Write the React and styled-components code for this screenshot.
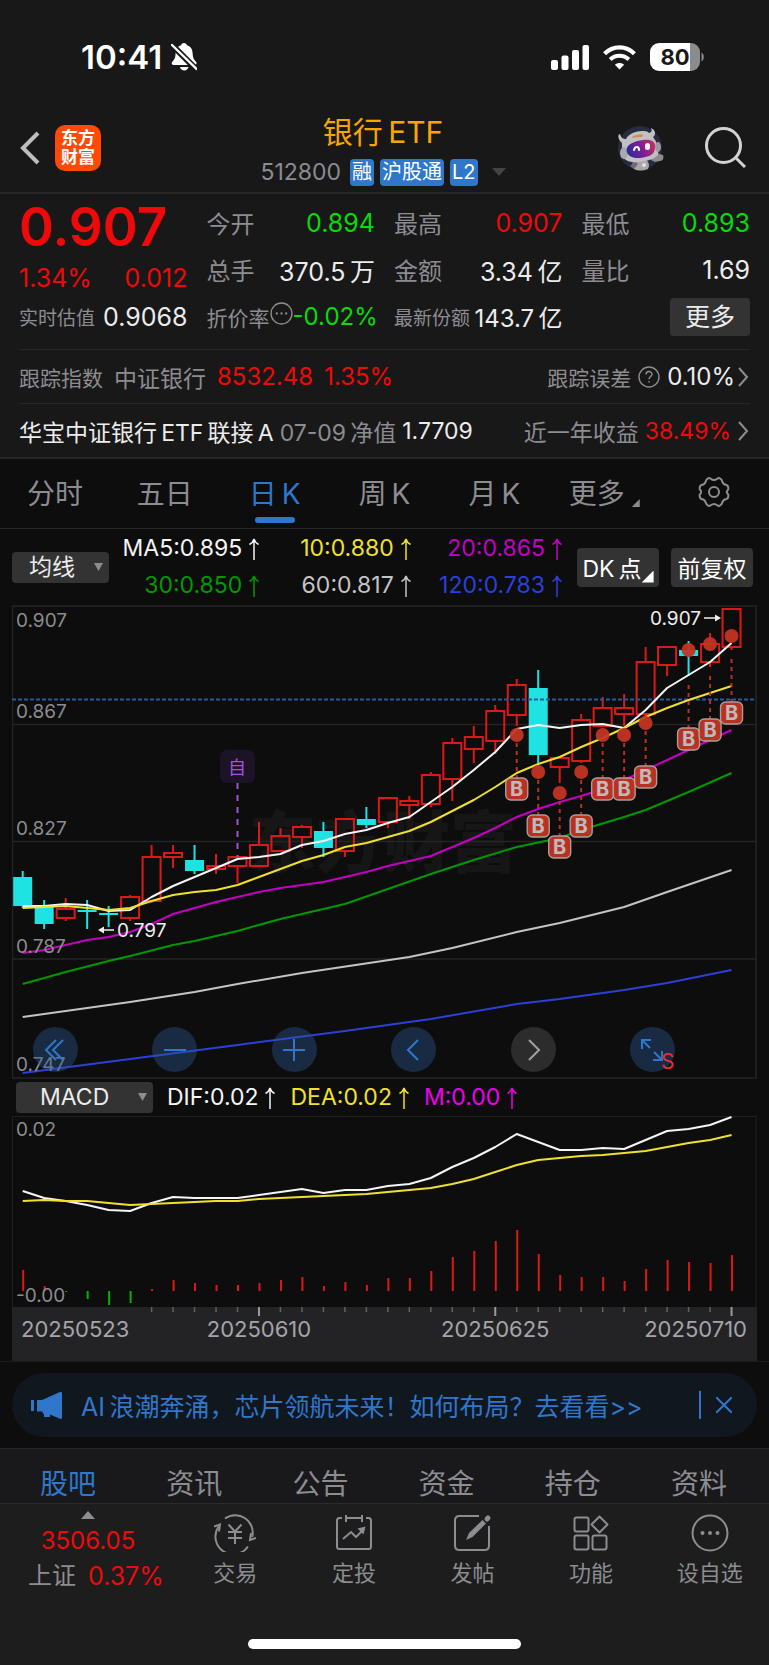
import React from 'react';
import styled, { createGlobalStyle } from 'styled-components';

const colors = {
  page: '#0d0d0d',
  panel: '#181818',
  nav: '#1d1d1d',
  line: '#262626',
  control: '#333333',
  text: '#ececec',
  muted: '#8c8c91',
  blue: '#2f77cb',
  red: '#ee0a0a',
  candle: '#dc1919',
  green: '#06dd06',
  cyan: '#1fe3e3',
  yellow: '#f0e130',
  magenta: '#c400c4',
  signal: '#c43423',
};

const GlobalStyle = createGlobalStyle`
  * { box-sizing: border-box; }
  body {
    margin: 0;
    background: ${colors.page};
    color: ${colors.text};
    font-family: Inter, "Noto Sans CJK SC", sans-serif;
    -webkit-font-smoothing: antialiased;
  }
  button, select {
    margin: 0;
    padding: 0;
    border: 0;
    background: none;
    color: inherit;
    font: inherit;
    cursor: pointer;
  }
  a { color: inherit; text-decoration: none; }
  p, h1 { margin: 0; }
  svg { display: block; flex: none; }
`;

const tones = {
  up: colors.red,
  down: colors.green,
  muted: colors.muted,
  plain: colors.text,
};

/* ---------- top of the screen ---------- */

const StatusBar = styled.div`
  display: flex;
  align-items: center;
  justify-content: space-between;
  height: 102px;
  padding: 12px 64px 0 81px;
  background: ${colors.panel};
  color: #fff;
`;

const StatusGroup = styled.div`
  display: flex;
  align-items: center;
  gap: ${(p) => p.$gap}px;
`;

const Clock = styled.span`
  font-size: 33px;
  font-weight: 600;
  line-height: 40px;
`;

const Header = styled.header`
  display: grid;
  grid-template-columns: 1fr auto 1fr;
  align-items: center;
  padding: 10px 23px 0 20px;
  border-bottom: 2px solid ${colors.line};
  background: ${colors.panel};
`;

const HeaderSide = styled.div`
  display: flex;
  align-items: center;
  justify-content: ${(p) => (p.$end ? 'flex-end' : 'flex-start')};
  gap: ${(p) => (p.$end ? 41 : 15)}px;
  padding-bottom: 9px;
`;

const Logo = styled.span`
  display: grid;
  place-content: center;
  width: 46px;
  height: 46px;
  border-radius: 10px;
  background: #ff4a05;
  color: #fff;
  font-size: 17px;
  font-weight: 700;
  line-height: 19px;
  text-align: center;
`;

const HeaderTitle = styled.div`
  display: flex;
  flex-direction: column;
  align-items: center;
`;

const Name = styled.h1`
  color: #f7a500;
  font-size: 30px;
  font-weight: 400;
  line-height: 40px;
`;

const CodeLine = styled.div`
  display: flex;
  align-items: center;
  gap: 6px;
  height: 40px;
  color: ${colors.muted};
  font-size: 23px;
`;

const Code = styled.span`
  margin-right: 3px;
`;

const Tag = styled.span`
  padding: 0 2px;
  border-radius: 4px;
  background: ${colors.blue};
  color: #fff;
  font-size: 20px;
  line-height: 27px;
`;

const CodeArrow = styled.span`
  margin-left: 8px;
`;

/* ---------- quote ---------- */

const Quote = styled.section`
  padding: 0 19px;
  border-bottom: 2px solid ${colors.line};
  background: ${colors.panel};
`;

const QuoteGrid = styled.div`
  display: grid;
  grid-template-columns: repeat(4, minmax(0, 1fr));
  grid-auto-rows: 47px;
  column-gap: 19px;
  align-items: center;
  padding: 5px 0 9px;
`;

const PriceBlock = styled.div`
  grid-row: span 2;
  align-self: start;
  color: ${colors.red};
`;

const Price = styled.p`
  font-size: 53px;
  font-weight: 600;
  line-height: 56px;
`;

const Change = styled.p`
  display: flex;
  justify-content: space-between;
  font-size: 25px;
  line-height: 46px;
`;

const Cell = styled.div`
  display: flex;
  align-items: center;
  justify-content: space-between;
  white-space: nowrap;
`;

const Label = styled.span`
  display: flex;
  color: ${colors.muted};
  font-size: ${(p) => p.$size || 24}px;
`;

const Value = styled.span`
  color: ${(p) => tones[p.$tone || 'plain']};
  font-size: ${(p) => p.$size || 25}px;
`;

const MoreButton = styled.button`
  justify-self: end;
  width: 80px;
  height: 38px;
  border-radius: 4px;
  background: ${colors.control};
  font-size: 25px;
  line-height: 38px;
`;

const InfoRow = styled.a`
  display: flex;
  align-items: center;
  justify-content: space-between;
  height: 54px;
  border-top: 1px solid ${colors.line};
  font-size: 23px;
  white-space: nowrap;
`;

const InfoGroup = styled.span`
  display: flex;
  align-items: center;
  gap: ${(p) => p.$gap || 6}px;
`;

const Tone = styled.span`
  color: ${(p) => tones[p.$tone]};
  font-size: ${(p) => p.$size || 23}px;
`;

/* ---------- period tabs and averages ---------- */

const Periods = styled.div`
  display: grid;
  grid-template-columns: repeat(7, 1fr);
  height: 70px;
  border-bottom: 1px solid ${colors.line};
`;

const Period = styled.button`
  display: flex;
  position: relative;
  align-items: center;
  justify-content: center;
  gap: 7px;
  padding-bottom: 3px;
  color: ${(p) => (p.$active ? colors.blue : colors.muted)};
  font-size: 28px;

  &::after {
    content: '';
    display: ${(p) => (p.$active ? 'block' : 'none')};
    position: absolute;
    bottom: 5px;
    left: 50%;
    width: 40px;
    height: 6px;
    margin-left: -20px;
    border-radius: 3px;
    background: ${colors.blue};
  }
`;

const CornerMark = styled.span`
  align-self: flex-end;
  width: ${(p) => p.$size}px;
  height: ${(p) => p.$size}px;
  margin-bottom: ${(p) => p.$lift}px;
  background: currentColor;
  clip-path: polygon(100% 0, 100% 100%, 0 100%);
`;

const AverageBar = styled.div`
  display: flex;
  align-items: center;
  height: 76px;
  padding: 0 16px 0 12px;
`;

const Picker = styled.label`
  display: block;
  position: relative;
  width: ${(p) => p.$width}px;
  height: 31px;
  border-radius: 4px;
  background: ${colors.control};
  font-size: 23px;

  svg {
    position: absolute;
    top: 11px;
    right: 6px;
    pointer-events: none;
  }
`;

const PickerSelect = styled.select`
  display: block;
  width: 100%;
  height: 31px;
  padding-left: ${(p) => p.$indent}px;
  appearance: none;
  line-height: 31px;
`;

const Averages = styled.div`
  display: grid;
  flex: 1;
  grid-template-columns: repeat(3, 1fr);
  margin-right: 14px;
`;

const Reading = styled.span`
  display: flex;
  align-items: center;
  justify-content: flex-end;
  gap: 6px;
  color: ${(p) => p.$color};
  font-size: 23px;
  line-height: 37px;
  white-space: nowrap;
`;

const ToolButton = styled.button`
  display: flex;
  align-items: center;
  justify-content: center;
  width: 82px;
  height: 39px;
  border-radius: 4px;
  background: ${colors.control};
  color: #fff;
  font-size: 23px;
  white-space: nowrap;

  & + & {
    margin-left: 12px;
  }
`;

/* ---------- charts ---------- */

const ChartBox = styled.div`
  position: relative;
  margin: 0 12px;
`;

const ChartSvg = styled.svg`
  width: 100%;
  height: auto;
  font-family: Inter, "Noto Sans CJK SC", sans-serif;
`;

const ChartControls = styled.div`
  display: flex;
  position: absolute;
  right: 82px;
  bottom: 7px;
  left: 21px;
  justify-content: space-between;
`;

const RoundButton = styled.button`
  display: grid;
  place-items: center;
  width: 45px;
  height: 45px;
  border-radius: 50%;
  background: ${(p) => (p.$idle ? 'rgba(92, 92, 96, 0.4)' : 'rgba(42, 90, 148, 0.4)')};
  color: ${(p) => (p.$idle ? '#a0a0a0' : colors.blue)};

  svg {
    overflow: visible;
  }
`;

const MacdBar = styled.div`
  display: flex;
  align-items: center;
  gap: 14px;
  height: 37px;
  padding: 0 16px;
`;

/* ---------- banner and bottom bars ---------- */

const BannerWrap = styled.div`
  padding: 11px 12px;
  border-top: 1px solid #1a1a1a;
`;

const Banner = styled.div`
  display: flex;
  align-items: center;
  height: 64px;
  padding: 0 25px 0 19px;
  border-radius: 32px;
  background: #10171f;
  color: ${colors.blue};
  font-size: 25px;
`;

const BannerLink = styled.a`
  flex: 1;
  margin-left: 19px;
  white-space: nowrap;
`;

const BannerClose = styled.button`
  display: flex;
  align-items: center;
  height: 28px;
  padding-left: 15px;
  border-left: 2px solid ${colors.blue};
`;

const Sections = styled.nav`
  display: grid;
  grid-template-columns: repeat(6, 1fr);
  padding: 17px 7px 0 5px;
  border-top: 1px solid ${colors.line};
  border-bottom: 1px solid #2c2c2c;
  background: #19191b;
`;

const SectionLink = styled.a`
  color: ${(p) => (p.$active ? colors.blue : colors.muted)};
  font-size: 28px;
  line-height: 37px;
  text-align: center;
`;

const ActionBar = styled.nav`
  display: grid;
  grid-template-columns: 176px repeat(5, 1fr);
  height: 92px;
  background: ${colors.nav};
  color: ${colors.muted};
`;

const IndexLink = styled.a`
  display: flex;
  flex-direction: column;
  padding: 7px 0 0 28px;
  white-space: nowrap;
`;

const IndexTop = styled.span`
  display: flex;
  flex-direction: column;
  align-items: center;
  width: 120px;
  color: ${colors.red};
  font-size: 24px;
  line-height: 44px;
`;

const IndexLine = styled.span`
  display: flex;
  gap: 12px;
  font-size: 24px;
  line-height: 26px;
`;

const Action = styled.a`
  display: flex;
  flex-direction: column;
  align-items: center;
  padding-top: 10px;
  font-size: 22px;
  line-height: 43px;
`;

const HomeArea = styled.div`
  display: flex;
  justify-content: center;
  padding: 43px 0 16px;
  background: ${colors.nav};
`;

const HomeBar = styled.span`
  width: 273px;
  height: 10px;
  border-radius: 5px;
  background: #fff;
`;

/* ---------- icons ---------- */

const MutedBell = () => (
  <svg width="26" height="28" viewBox="0 0 26 28" fill="#fff" aria-label="静音">
    <path d="M13 0c1.7 0 2.6 1 2.9 2.2 3.7 1 5.6 4 5.7 7.8.2 4.6 1.2 6.4 3.4 8.800.9 1 .8 3.200-1 3.200H2.300c-1.800 0-2-2-1-3.200 2.200-2.400 3.200-4.200 3.300-8.800.1-3.800 2-6.800 5.500-7.800C10.400 1 11.300 0 13 0z" />
    <path d="M9 24h8.500c-.6 2-2 3.500-4.200 3.500S9.500 26 9 24z" />
    <path d="M0 1 26 27" stroke={colors.panel} strokeWidth="6" />
    <path d="M1 2l24.500 24" stroke="#fff" strokeWidth="2.4" strokeLinecap="round" />
  </svg>
);

const Signal = () => (
  <svg width="38" height="25" viewBox="0 0 38 25" fill="#fff" aria-label="信号">
    <rect y="15" width="7" height="10" rx="2" />
    <rect x="10.5" y="10.5" width="7" height="14.5" rx="2" />
    <rect x="21" y="5" width="7" height="20" rx="2" />
    <rect x="31.5" width="6.5" height="25" rx="2" />
  </svg>
);

const Wifi = () => (
  <svg width="33" height="25" viewBox="0 0 33 25" fill="none" stroke="#fff" strokeWidth="4.2" aria-label="无线网络">
    <path d="M1.6 8.7C9.8.2 23.2.2 31.4 8.7" />
    <path d="M7.2 14.5c5.2-5 13.4-5 18.6 0" />
    <path d="M16.5 24.5l-4.6-4.8c2.6-2.4 6.600-2.400 9.200 0z" fill="#fff" stroke="none" />
  </svg>
);

const Battery = () => (
  <svg width="55" height="28" viewBox="0 0 55 28" aria-label="电量">
    <path d="M9 0h31v28H9a9 9 0 0 1-9-9V9a9 9 0 0 1 9-9z" fill="#fff" />
    <path d="M40 0h1a9 9 0 0 1 9 9v10a9 9 0 0 1-9 9h-1z" fill="#8b8b8b" />
    <path d="M51.5 9.5c3 1.2 3 7.8 0 9z" fill="#8b8b8b" />
    <text x="25" y="22" textAnchor="middle" fill={colors.panel} fontSize="22" fontWeight="700">80</text>
  </svg>
);

const Chevron = ({ width, height, stroke = 2, flip, color = 'currentColor' }) => (
  <svg width={width} height={height} viewBox={`0 0 ${width} ${height}`} fill="none" stroke={color} strokeWidth={stroke}>
    <path
      d={
        flip
          ? `M${width - 2} 2 3 ${height / 2} ${width - 2} ${height - 2}`
          : `M2 2 ${width - 3} ${height / 2} 2 ${height - 2}`
      }
    />
  </svg>
);

const Robot = () => (
  <svg width="46" height="46" viewBox="0 0 46 46" aria-hidden="true">
    <defs>
      <linearGradient id="visor" x1="0" y1="0.6" x2="1" y2="0.3">
        <stop offset="0" stopColor="#2b2a98" />
        <stop offset="0.5" stopColor="#7a1f98" />
        <stop offset="1" stopColor="#c22f5c" />
      </linearGradient>
    </defs>
    <circle cx="22" cy="23" r="22" fill="#262c40" />
    <path d="M14 41c0-5 4-7 9-7s8 2 8 7l-1 3c-5 2-10 2-14 0z" fill="#aaa6ab" />
    <path d="M12 41l5-5 3 3-4 5z" fill="#6f6b78" />
    <path d="M33 35l4-6c1-2 3-2 4 0l4 1c1 3 0 6-3 6l-5 1z" fill="#8d8a92" />
    <path d="M4 18C-1 14 0 9 2 9c1 4 3 5 6 5 2-4 8-8 16-8 3 0 5 0 7 2 3-1 3-3 2-5 5 2 5 7 2 9 4 5 6 11 5 17-1 4-9 7-19 8C11 38 5 35 4 29z" fill="#c3c0c3" />
    <ellipse cx="6" cy="28" rx="4" ry="6" fill="#aaa7ae" />
    <ellipse cx="40" cy="22" rx="3" ry="5" fill="#9d99a4" />
    <path d="M9 23c1-4 8-7 16-8s12 1 12 6-1 8-6 10c-6 2-13 3-17 1-5-2-6-6-5-9z" fill="url(#visor)" />
    <path d="M16 25c1-4 5-4 5 0" stroke="#fff" strokeWidth="2" fill="none" strokeLinecap="round" />
    <rect x="27" y="18" width="5" height="7" rx="2.5" fill="#f5eef8" />
    <path d="M14 12c3-2 8-3 11-2l-1 2c-4 0-7 0-9 1z" fill="#d08a45" />
    <circle cx="26" cy="40" r="2" fill="#e3dfe2" />
  </svg>
);

const SearchIcon = () => (
  <svg width="41" height="41" viewBox="0 0 41 41" fill="none" stroke="#d2d2d2" strokeWidth="3">
    <circle cx="18.5" cy="18.5" r="17" />
    <path d="M31 31l9 9" />
  </svg>
);

const Triangle = ({ width, height, color = colors.muted, up }) => (
  <svg width={width} height={height} viewBox="0 0 10 10" preserveAspectRatio="none" fill={color}>
    <path d={up ? 'M5 0l5 10H0z' : 'M0 0h10L5 10z'} />
  </svg>
);

const UpArrow = () => (
  <svg width="12" height="22" viewBox="0 0 12 22" fill="none" stroke="currentColor" strokeWidth="1.5" aria-label="上升">
    <path d="M6 22V1M1.5 6.5C4 5 5.5 3 6 1c.5 2 2 4 4.5 5.5" />
  </svg>
);

const DotsCircle = ({ size }) => (
  <svg width={size} height={size} viewBox="0 0 22 22" fill="none" stroke="currentColor" strokeWidth="1.3">
    <circle cx="11" cy="11" r="10" />
    <g fill="currentColor" stroke="none">
      <circle cx="6.5" cy="11" r="1.1" />
      <circle cx="11" cy="11" r="1.1" />
      <circle cx="15.5" cy="11" r="1.1" />
    </g>
  </svg>
);

const HelpCircle = () => (
  <svg width="22" height="22" viewBox="0 0 22 22" fill="none" stroke={colors.muted} strokeWidth="1.4">
    <circle cx="11" cy="11" r="10" />
    <path d="M8 8.6c0-4 6-4 6-.4 0 2.3-3 2.5-3 5M11 15v1.6" />
  </svg>
);

const Gear = () => (
  <svg width="32" height="32" viewBox="0 0 32 32" fill="none" stroke={colors.muted} strokeWidth="2" strokeLinejoin="round">
    <path d="M10.5 2.2c1-.4 1.600 0 2.200.5 2 1.600 4.600 1.600 6.600 0 .6-.5 1.200-.9 2.200-.5 1.600.7 2.400 1.600 2.700 3 .5 2.200 2 3.400 4.200 3.800 1.300.3 1.900 2.200 2 3.400.1.900-.3 1.400-.8 1.900-1 1-1 2.400 0 3.400.5.500.9 1 .8 1.900-.1 1.200-.7 3.100-2 3.400-2.200.4-3.700 1.600-4.200 3.800-.3 1.400-1.100 2.300-2.700 3-1 .4-1.600 0-2.200-.5-2-1.600-4.600-1.600-6.600 0-.6.5-1.200.9-2.200.5-1.600-.7-2.400-1.600-2.700-3-.5-2.200-2-3.400-4.200-3.800-1.300-.3-1.900-2.200-2-3.400-.1-.9.3-1.400.8-1.900 1-1 1-2.400 0-3.400-.5-.5-.9-1-.8-1.900.1-1.200.7-3.100 2-3.400 2.200-.4 3.700-1.600 4.200-3.800.3-1.400 1.100-2.300 2.700-3z" />
    <circle cx="16" cy="16" r="5" />
  </svg>
);

const Horn = () => (
  <svg width="31" height="27" viewBox="0 0 31 27" fill="currentColor">
    <rect y="8" width="3" height="11" />
    <path d="M6 8h5L29 0q2-.5 2 1.500v24q0 2-2 1.200L19 22.500v2.500h-6v-2.500l-2-3H6z" />
  </svg>
);

const Cross = () => (
  <svg width="16" height="16" viewBox="0 0 16 16" stroke="currentColor" strokeWidth="2">
    <path d="M0 0l16 16M16 0L0 16" />
  </svg>
);

const ActionIcon = ({ children }) => (
  <svg width="42" height="38" viewBox="0 0 42 38" fill="none" stroke="currentColor" strokeWidth="2">
    {children}
  </svg>
);

const actions = [
  {
    label: '交易',
    icon: (
      <ActionIcon>
        <path d="M11 4.500A17.500 17.500 0 0 1 38.200 23M34 32.500A17.500 17.500 0 0 1 4.500 12.500" />
        <path d="M0 12.500l6-2-1 7M42 24l-6 2 1-7" />
        <path d="M14.500 10.500l6.500 7 6.500-7M14 18h14M14 24h14M21 18v12" />
      </ActionIcon>
    ),
  },
  {
    label: '定投',
    icon: (
      <ActionIcon>
        <path d="M9 4H6.500Q4 4 4 6.500v26Q4 35 6.500 35h29q2.500 0 2.500-2.500v-26Q38 4 35.500 4H33" />
        <path d="M13 1v7M29 1v7M13 4h16M10 25l8-7 5 5 8-8" />
        <path d="M24.500 14.500l8-2-2 8z" fill="currentColor" stroke="none" />
      </ActionIcon>
    ),
  },
  {
    label: '发帖',
    icon: (
      <ActionIcon>
        <path d="M28 2H8.500Q4 2 4 6.500v25Q4 36 8.500 36h25q4.500 0 4.500-4.500V12" />
        <path d="M15 26l3-7L31.500 6l3.500 3.500L21.500 23z" fill="currentColor" stroke="none" />
        <path d="M36 5l1-1" strokeWidth="5" strokeLinecap="round" />
      </ActionIcon>
    ),
  },
  {
    label: '功能',
    icon: (
      <ActionIcon>
        <rect x="4.500" y="3.500" width="14" height="14" rx="2" />
        <path d="M29.500 2.500l8 8-8 8-8-8z" strokeLinejoin="round" />
        <rect x="4.500" y="21.500" width="14" height="14" rx="2" />
        <rect x="22.500" y="21.500" width="14" height="14" rx="2" />
      </ActionIcon>
    ),
  },
  {
    label: '设自选',
    icon: (
      <ActionIcon>
        <circle cx="21" cy="19" r="17.5" />
        <g fill="currentColor" stroke="none">
          <circle cx="13.5" cy="19" r="2" />
          <circle cx="21" cy="19" r="2" />
          <circle cx="28.5" cy="19" r="2" />
        </g>
      </ActionIcon>
    ),
  },
];

/* ---------- chart data, in chart units ---------- */

const xAt = (i) => 10.7 + i * 21.48;

// rising, high, body top, body bottom, low
const candles = [
  [0, 266, 272, 301, 303], [0, 295, 302, 319, 324], [1, 293, 304, 313, 316], [0, 295, 305, 307, 324],
  [0, 301, 308, 310, 322], [1, 290, 292, 313, 316], [1, 240, 252, 296, 298], [1, 240, 248, 252, 263],
  [0, 240, 255, 266, 269], [1, 249, 261, 264, 269], [1, 252, 252, 261, 278], [1, 217, 240, 261, 261],
  [1, 223, 231, 246, 246], [1, 220, 222, 232, 243], [0, 217, 226, 243, 252], [1, 214, 214, 246, 252],
  [0, 202, 214, 220, 223], [1, 193, 193, 217, 223], [1, 191, 196, 200, 214], [1, 167, 170, 199, 202],
  [1, 133, 138, 174, 196], [1, 121, 132, 144, 158], [1, 100, 106, 136, 149], [1, 74, 80, 110, 121],
  [0, 65, 83, 150, 158], [1, 153, 153, 162, 178], [1, 109, 115, 156, 158], [1, 92, 103, 121, 122],
  [1, 89, 103, 109, 121], [1, 42, 57, 109, 112], [1, 42, 42, 60, 71], [0, 36, 45, 51, 71],
  [1, 28, 39, 57, 62], [1, 4, 4, 42, 45],
];

// candle index, dot, start of the dashes, badge
const signals = [
  [23, 130, 130, 184], [24, 167, 167, 221], [25, 188, 188, 242], [26, 167, 167, 221], [27, 130, 130, 184],
  [28, 130, 130, 184], [29, 118, 118, 172], [31, 45, 80, 134], [32, 39, 71, 125], [33, 31, 54, 108],
];

const dense = (ys) => ys.map((y, i) => [i, y]);

const averages = [
  {
    color: '#f5f5f5',
    points: dense([301, 301, 299, 300, 306, 305, 292, 281, 272, 263, 254, 252, 249, 240, 236, 229, 225, 218, 212, 197, 182, 165, 147, 124, 120, 123, 120, 119, 123, 105, 83, 70, 57, 38]),
  },
  {
    color: colors.yellow,
    points: dense([303, 302, 301, 303, 305, 303, 296, 290, 287, 285, 280, 272, 264, 256, 250, 242, 238, 232, 226, 217, 206, 195, 182, 168, 159, 152, 142, 133, 123, 112, 103, 95, 88, 81]),
  },
  {
    color: colors.magenta,
    points: dense([348, 345, 340, 335, 332, 327, 319, 309, 303, 297, 292, 287, 283, 280, 277, 272, 267, 261, 256, 251, 242, 233, 223, 212, 204, 197, 191, 184, 175, 165, 155, 145, 135, 125]),
  },
  {
    color: '#009a00',
    points: [[0, 379], [2, 367], [4, 356], [5, 351], [7, 340], [8, 336], [10, 326], [12, 314], [14, 304], [15, 299], [17, 284], [19, 269], [21, 255], [23, 242], [25, 233], [26, 225], [28, 212], [29, 205], [31, 187], [33, 168]],
  },
  {
    color: '#c4c4c4',
    points: [[0, 412], [2, 406], [5, 397], [8, 387], [10, 379], [13, 368], [18, 352], [20, 343], [23, 327], [25, 318], [28, 302], [30, 287], [33, 265]],
  },
  {
    color: '#2c40d8',
    points: [[0, 468], [5, 454], [10, 440], [15, 426], [19, 414], [23, 399], [25, 394], [28, 385], [30, 378], [33, 365]],
  },
];

const dif = dense([75, 82, 85, 89, 94, 95, 87, 81, 82, 82, 82, 79, 76, 73, 77, 74, 74, 70, 68, 62, 51, 42, 31, 18, 26, 34, 34, 32, 33, 24, 15, 13, 9, 1]);
const dea = dense([85, 84, 85, 85, 87, 89, 88, 87, 86, 85, 85, 83, 82, 81, 80, 79, 78, 76, 74, 72, 68, 63, 56, 49, 44, 42, 40, 39, 37, 35, 31, 27, 24, 19]);
const macd = [21, 5, -1, -8, -14, -12, 2, 11, 8, 6, 6, 8, 11, 14, 5, 9, 6, 13, 13, 20, 34, 40, 50, 61, 37, 16, 14, 14, 10, 22, 31, 29, 28, 36];

const Line = ({ points, color }) => (
  <polyline
    points={points.map(([i, y]) => `${xAt(i)},${y}`).join(' ')}
    fill="none"
    stroke={color}
    strokeWidth="2"
    strokeLinejoin="round"
  />
);

const Candle = ({ index, data: [rising, high, top, bottom, low] }) => {
  const x = xAt(index);
  if (!rising) {
    return (
      <g fill={colors.cyan} stroke={colors.cyan} strokeWidth="2">
        <path d={`M${x} ${high}V${low}`} />
        <rect x={x - 9.5} y={top} width="19" height={bottom - top} stroke="none" />
      </g>
    );
  }
  return (
    <g fill="none" stroke={colors.candle} strokeWidth="2">
      <path d={`M${x} ${high}V${top}M${x} ${bottom}V${low}`} />
      <rect x={x - 9} y={top} width="18" height={bottom - top} />
    </g>
  );
};

const PriceChart = () => (
  <ChartSvg viewBox="0 0 745 474" role="img" aria-label="日K线图">
    <text x="371" y="262" textAnchor="middle" fill="#161616" fontSize="67" fontWeight="900">东方财富</text>
    <g fill="none" stroke="#242424" strokeWidth="1.5">
      <rect x="0.5" y="1" width="743.5" height="472" />
      <path d="M0 119.500h744M0 236.500h744M0 354h744" />
    </g>
    {candles.map((data, i) => <Candle key={i} index={i} data={data} />)}
    <path d="M0 94.500h744" stroke="#275a9c" strokeWidth="2" strokeDasharray="4 2" />
    {averages.map((line) => <Line key={line.color} {...line} />)}
    <path d={`M${xAt(10)} 178V252`} stroke="#9a55d0" strokeWidth="2" strokeDasharray="6 6" />
    <rect x="208" y="145" width="35" height="33" rx="7" fill="#1c1326" />
    <text x="225" y="169" textAnchor="middle" fill="#a152e0" fontSize="18">自</text>
    {signals.map(([i, dot, start, badge]) => (
      <g key={i} opacity="0.94">
        <path d={`M${xAt(i)} ${start}V${badge}`} stroke={colors.signal} strokeWidth="2" strokeDasharray="4 4" />
        <circle cx={xAt(i)} cy={dot} r="7" fill={colors.signal} />
        <rect x={xAt(i) - 11} y={badge - 11} width="22" height="22" rx="5" fill={colors.signal} stroke="#b9a5a2" strokeWidth="1.4" />
        <text x={xAt(i)} y={badge + 7} textAnchor="middle" fill="#c9c5c4" fontSize="20" fontWeight="700">B</text>
      </g>
    ))}
    <g fill="#8c8c90" fontSize="19">
      <text x="4" y="22">0.907</text>
      <text x="4" y="113">0.867</text>
      <text x="4" y="230">0.827</text>
      <text x="4" y="348">0.787</text>
      <text x="4" y="466">0.747</text>
    </g>
    <g fill="#eeeeee" fontSize="19">
      <text x="638" y="20">0.907</text>
      <text x="105" y="332">0.797</text>
    </g>
    <g fill="#eeeeee" stroke="#eeeeee" strokeWidth="1.6">
      <path d="M692 13h12M90 325h12" />
      <path d="M703 9.500l6 3.500-6 3.500zM92 321.500l-6 3.500 6 3.500z" stroke="none" />
    </g>
  </ChartSvg>
);

const MacdChart = () => (
  <ChartSvg viewBox="0 0 745 245" role="img" aria-label="MACD">
    <rect x="0.5" y="0.5" width="743.5" height="191" fill="none" stroke="#202020" />
    <rect y="191" width="745" height="54" fill="#232325" />
    {macd.map((v, i) => (
      <rect
        key={i}
        x={xAt(i) - 0.5}
        y={v > 0 ? 175 - v : 175}
        width="2"
        height={Math.abs(v)}
        fill={v > 0 ? colors.candle : '#00b400'}
      />
    ))}
    <Line points={dif} color="#f5f5f5" />
    <Line points={dea} color={colors.yellow} />
    <g fill="#8c8c90" fontSize="19">
      <text x="4" y="20">0.02</text>
      <text x="4" y="186">-0.00</text>
    </g>
    {macd.slice(6).map((_, n) => {
      const i = n + 6;
      const major = i % 11 === 0;
      return (
        <path
          key={i}
          d={`M${xAt(i)} 191v${major ? 9 : 5}`}
          stroke={major ? '#9a9a9a' : '#626262'}
          strokeWidth={major ? 2 : 1.5}
        />
      );
    })}
    <g fill="#a5a5a8" fontSize="22">
      <text x="9" y="221">20250523</text>
      <text x={xAt(11)} y="221" textAnchor="middle">20250610</text>
      <text x={xAt(22)} y="221" textAnchor="middle">20250625</text>
      <text x="735" y="221" textAnchor="end">20250710</text>
    </g>
  </ChartSvg>
);

/* ---------- lists ---------- */

// a thin space goes between Chinese characters and Latin ones
const periods = ['分时', '五日', '日\u2009K', '周\u2009K', '月\u2009K', '更多'];

const readings = [
  ['MA5:0.895', '#f5f5f5'],
  ['10:0.880', colors.yellow],
  ['20:0.865', colors.magenta],
  ['30:0.850', '#009a00'],
  ['60:0.817', '#c4c4c4'],
  ['120:0.783', '#2c40d8'],
];

const macdReadings = [
  ['DIF:0.02', '#f5f5f5'],
  ['DEA:0.02', colors.yellow],
  ['M:0.00', '#ee00ee'],
];

const stats = [
  ['今开', '0.894', 'down'],
  ['最高', '0.907', 'up'],
  ['最低', '0.893', 'down'],
  ['总手', '370.5\u2009万', 'plain'],
  ['金额', '3.34\u2009亿', 'plain'],
  ['量比', '1.69', 'plain'],
];

const sections = ['股吧', '资讯', '公告', '资金', '持仓', '资料'];

const Control = ({ label, idle, children }) => (
  <RoundButton type="button" aria-label={label} $idle={idle}>
    <svg width="30" height="30" viewBox="0 0 30 30" fill="none" stroke="currentColor" strokeWidth="2">
      {children}
    </svg>
  </RoundButton>
);

export default function App() {
  return (
    <>
      <GlobalStyle />
      <StatusBar>
        <StatusGroup $gap={9}>
          <Clock>10:41</Clock>
          <MutedBell />
        </StatusGroup>
        <StatusGroup $gap={14}>
          <Signal />
          <Wifi />
          <Battery />
        </StatusGroup>
      </StatusBar>

      <Header>
        <HeaderSide>
          <button type="button" aria-label="返回">
            <Chevron width={20} height={34} stroke={4} flip color="#bdbdbd" />
          </button>
          <Logo>东方<br />财富</Logo>
        </HeaderSide>
        <HeaderTitle>
          <Name>银行&thinsp;ETF</Name>
          <CodeLine>
            <Code>512800</Code>
            <Tag>融</Tag>
            <Tag>沪股通</Tag>
            <Tag>L2</Tag>
            <CodeArrow><Triangle width={14} height={8} color="#444" /></CodeArrow>
          </CodeLine>
        </HeaderTitle>
        <HeaderSide $end>
          <button type="button" aria-label="智能助手"><Robot /></button>
          <button type="button" aria-label="搜索"><SearchIcon /></button>
        </HeaderSide>
      </Header>

      <Quote>
        <QuoteGrid>
          <PriceBlock>
            <Price>0.907</Price>
            <Change><span>1.34%</span><span>0.012</span></Change>
          </PriceBlock>
          {stats.map(([label, value, tone]) => (
            <Cell key={label}>
              <Label>{label}</Label>
              <Value $tone={tone}>{value}</Value>
            </Cell>
          ))}
          <Cell>
            <Label $size={19}>实时估值</Label>
            <Value>0.9068</Value>
          </Cell>
          <Cell>
            <Label $size={21}>折价率<DotsCircle size={23} /></Label>
            <Value $tone="down" $size={24}>-0.02%</Value>
          </Cell>
          <Cell>
            <Label $size={19}>最新份额</Label>
            <Value $size={24}>143.7&thinsp;亿</Value>
          </Cell>
          <MoreButton type="button">更多</MoreButton>
        </QuoteGrid>
        <InfoRow href="#index">
          <InfoGroup $gap={11}>
            <Tone $tone="muted" $size={21}>跟踪指数</Tone>
            <Tone $tone="muted">中证银行</Tone>
            <Tone $tone="up" $size={24}>8532.48</Tone>
            <Tone $tone="up" $size={24}>1.35%</Tone>
          </InfoGroup>
          <InfoGroup $gap={7}>
            <Tone $tone="muted" $size={21}>跟踪误差</Tone>
            <HelpCircle />
            <InfoGroup $gap={2}>
              <Tone $tone="plain" $size={24}>0.10%</Tone>
              <Chevron width={13} height={22} color={colors.muted} />
            </InfoGroup>
          </InfoGroup>
        </InfoRow>
        <InfoRow href="#fund">
          <InfoGroup>
            <Tone $tone="plain">华宝中证银行&thinsp;ETF&thinsp;联接&thinsp;A</Tone>
            <Tone $tone="muted">07-09&thinsp;净值</Tone>
            <Tone $tone="plain">1.7709</Tone>
          </InfoGroup>
          <InfoGroup>
            <Tone $tone="muted">近一年收益</Tone>
            <Tone $tone="up">38.49%</Tone>
            <Chevron width={13} height={22} color={colors.muted} />
          </InfoGroup>
        </InfoRow>
      </Quote>

      <Periods>
        {periods.map((name, i) => (
          <Period key={name} type="button" $active={i === 2}>
            {name}
            {i === 5 && <CornerMark $size={8} $lift={18} />}
          </Period>
        ))}
        <Period type="button" aria-label="设置"><Gear /></Period>
      </Periods>

      <AverageBar>
        <Picker $width={97}>
          <PickerSelect $indent={17} aria-label="主图指标" defaultValue="ma">
            <option value="ma">均线</option>
          </PickerSelect>
          <Triangle width={9} height={8} />
        </Picker>
        <Averages>
          {readings.map(([text, color]) => (
            <Reading key={text} $color={color}>{text}<UpArrow /></Reading>
          ))}
        </Averages>
        <ToolButton type="button">DK&thinsp;点<CornerMark $size={12} $lift={4} /></ToolButton>
        <ToolButton type="button">前复权</ToolButton>
      </AverageBar>

      <ChartBox>
        <PriceChart />
        <ChartControls>
          <Control label="最早"><path d="M15 5L5 15l10 10M22 5L12 15l10 10" /></Control>
          <Control label="缩小"><path d="M4 15h22" /></Control>
          <Control label="放大"><path d="M4 15h22M15 4v22" /></Control>
          <Control label="向前"><path d="M19 5L9 15l10 10" /></Control>
          <Control label="向后" idle><path d="M11 5l10 10-10 10" /></Control>
          <Control label="全屏">
            <path d="M5 14V5h9M5 5l8 8M16 25h9v-9M25 25l-8-8" />
            <text x="24" y="34" fill="#ee2b3b" stroke="none" fontSize="21">S</text>
          </Control>
        </ChartControls>
      </ChartBox>

      <MacdBar>
        <Picker $width={137}>
          <PickerSelect $indent={24} aria-label="副图指标" defaultValue="macd">
            <option value="macd">MACD</option>
          </PickerSelect>
          <Triangle width={9} height={8} />
        </Picker>
        {macdReadings.map(([text, color]) => (
          <Reading key={text} $color={color}>{text}<UpArrow /></Reading>
        ))}
      </MacdBar>

      <ChartBox>
        <MacdChart />
      </ChartBox>

      <BannerWrap>
        <Banner>
          <Horn />
          <BannerLink href="#promo">AI&thinsp;浪潮奔涌，芯片领航未来！如何布局？去看看&gt;&gt;</BannerLink>
          <BannerClose type="button" aria-label="关闭"><Cross /></BannerClose>
        </Banner>
      </BannerWrap>

      <Sections>
        {sections.map((name, i) => (
          <SectionLink key={name} href={`#section-${i}`} $active={i === 0}>{name}</SectionLink>
        ))}
      </Sections>
      <ActionBar>
        <IndexLink href="#market">
          <IndexTop>
            <Triangle width={14} height={8} up />
            3506.05
          </IndexTop>
          <IndexLine>上证<Tone $tone="up" $size={25}>0.37%</Tone></IndexLine>
        </IndexLink>
        {actions.map(({ label, icon }) => (
          <Action key={label} href={`#${label}`}>{icon}{label}</Action>
        ))}
      </ActionBar>
      <HomeArea><HomeBar /></HomeArea>
    </>
  );
}
